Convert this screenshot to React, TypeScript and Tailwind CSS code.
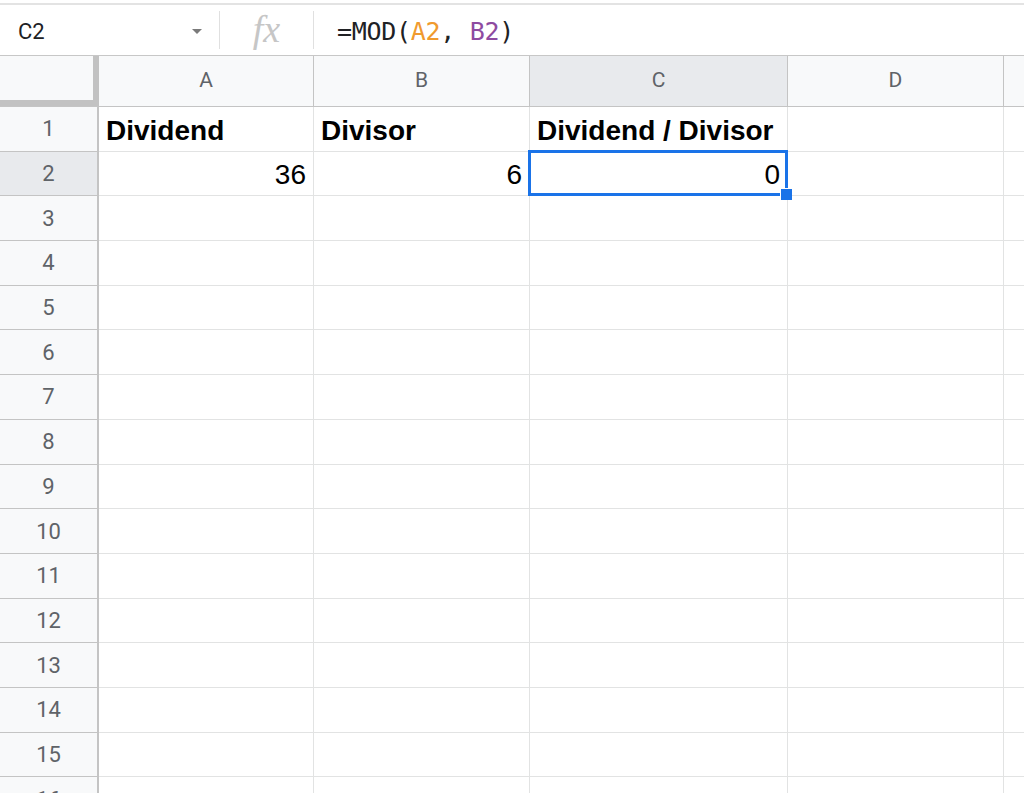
import React from 'react';

type Col = { label: string; width: string };

const COLS: Col[] = [
  { label: 'A', width: 'w-[215px]' },
  { label: 'B', width: 'w-[216px]' },
  { label: 'C', width: 'w-[258px]' },
  { label: 'D', width: 'w-[216px]' },
  { label: 'E', width: 'w-[200px]' },
];

// cell contents keyed by row then column
const DATA: Record<number, Record<string, { text: string; bold?: boolean; right?: boolean }>> = {
  1: {
    A: { text: 'Dividend', bold: true },
    B: { text: 'Divisor', bold: true },
    C: { text: 'Dividend / Divisor', bold: true },
  },
  2: {
    A: { text: '36', right: true },
    B: { text: '6', right: true },
    C: { text: '0', right: true },
  },
};

const ROWS = Array.from({ length: 16 }, (_, i) => i + 1);

const FormulaBar: React.FC = () => (
  <div className="h-[53px] border-t-2 border-t-[#e3e3e3] border-b border-b-[#c7c7c7] flex items-center bg-white">
    {/* Name box */}
    <div className="w-[219px] h-full flex items-center justify-between pl-[18px] pr-[17px]">
      <span className="text-[22px] text-[#202124] font-['Roboto',sans-serif] mt-[2px]">C2</span>
      <svg width="10" height="5" viewBox="0 0 10 5" className="mt-[2px]">
        <polygon points="0,0 10,0 5,5" fill="#7a7a7a" />
      </svg>
    </div>
    <div className="w-px h-[38px] bg-[#e0e0e0]" />
    {/* fx */}
    <div className="w-[93px] h-full flex items-center justify-center">
      <span className="text-[38px] leading-none italic text-[#c6c6c6] font-['Liberation_Serif',serif] -mt-[2px]">
        fx
      </span>
    </div>
    <div className="w-px h-[38px] bg-[#e0e0e0]" />
    {/* Formula */}
    <div className="pl-[23px] text-[25px] text-[#202124] font-['DejaVu_Sans_Mono',monospace] tracking-[-0.3px] mt-[3px]">
      =MOD(<span className="text-[#f09a2e]">A2</span>, <span className="text-[#8e4ba1]">B2</span>)
    </div>
  </div>
);

const HeaderRow: React.FC = () => (
  <div className="flex h-[51px] border-b border-[#c4c4c4] bg-[#f8f9fa]">
    {/* corner with freeze bars */}
    <div className="w-[99px] h-full shrink-0 border-r-[6px] border-b-[6px] border-[#c2c2c2] bg-[#f8f9fa]" />
    {COLS.map(c => (
      <div
        key={c.label}
        className={`${c.width} shrink-0 h-full flex items-center justify-center border-r border-[#c4c4c4] text-[21px] text-[#5f6368] font-['Roboto',sans-serif] ${
          c.label === 'C' ? 'bg-[#e8eaed]' : 'bg-[#f8f9fa]'
        }`}
      >
        {c.label === 'E' ? '' : c.label}
      </div>
    ))}
  </div>
);

export default function App() {
  return (
    <div className="w-[1024px] h-[793px] overflow-hidden bg-white pt-[3px]">
      <FormulaBar />
      <HeaderRow />

      {ROWS.map(r => (
        <div key={r} className="flex h-[44.7px]">
          {/* Row header */}
          <div
            className={`w-[99px] shrink-0 h-full flex items-center justify-center border-r-2 border-r-[#c4c4c4] border-b border-b-[#c4c4c4] text-[22px] text-[#5f6368] font-['Roboto',sans-serif] ${
              r === 2 ? 'bg-[#e8eaed]' : 'bg-[#f8f9fa]'
            }`}
          >
            {r}
          </div>

          {COLS.map(c => {
            const cell = DATA[r]?.[c.label];
            const selected = r === 2 && c.label === 'C';
            return (
              <div
                key={c.label}
                className={`${c.width} shrink-0 h-full relative flex items-end border-r border-b border-[#e2e3e3] px-[7px] pb-[4px] text-[28px] leading-[32px] text-black font-['Liberation_Sans',Arial,sans-serif] ${
                  cell?.right ? 'justify-end' : 'justify-start'
                } ${cell?.bold ? 'font-bold' : ''}`}
              >
                {cell && <span className="whitespace-nowrap">{cell.text}</span>}
                {selected && (
                  <>
                    <div className="absolute z-10 -left-[2px] -top-[2px] -right-[1px] -bottom-[1px] border-[3px] border-[#1a73e8]" />
                    <div className="absolute z-20 -right-[5px] -bottom-[5px] w-[12px] h-[12px] bg-[#1a73e8] border-l border-t border-white" />
                  </>
                )}
              </div>
            );
          })}
        </div>
      ))}
    </div>
  );
}
